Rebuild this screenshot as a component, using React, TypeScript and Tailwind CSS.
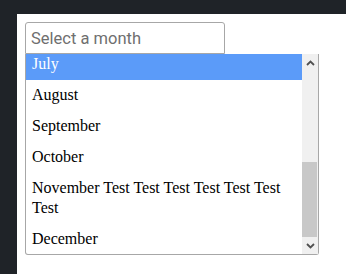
import React from 'react';

const MONTHS = ['July', 'August', 'September', 'October', 'November Test Test Test Test Test Test Test', 'December'];

function Chevron({ up }: { up: boolean }) {
    return (
        <svg width="9" height="6" viewBox="0 0 9 6" className="block">
            <polyline
                points={up ? '1,5 4.5,1.5 8,5' : '1,1 4.5,4.5 8,1'}
                fill="none"
                stroke="#505050"
                strokeWidth="1.8"
            />
        </svg>
    );
}

export default function App() {
    return (
        <div className="h-[274px] w-[346px] bg-[#1f2328] pt-[14px] pl-[17px]">
            <div className="h-[260px] bg-white pt-[8px] pl-[8px]">
                <input
                    type="text"
                    placeholder="Select a month"
                    className="block w-[200px] h-[32px] px-[5px] border border-[#a7a7a7] rounded-t-[3px] bg-white text-[16.5px] text-black placeholder-[#6f6f6f] outline-none"
                    style={{ fontFamily: 'Roboto, Arial, sans-serif' }}
                />
                {/* Open dropdown list, scrolled near the bottom */}
                <div className="flex w-[294px] h-[201px] border-x border-b border-[#a7a7a7] rounded-b-[3px] bg-white">
                    <div className="flex-1 overflow-hidden">
                        <div className="-mt-[5.5px]" style={{ fontFamily: '"Liberation Serif", "Times New Roman", serif' }}>
                            {MONTHS.map((month, i) => (
                                <div
                                    key={month}
                                    className={`pl-[6px] pr-[4px] py-[5.5px] text-[16px] leading-[20px] ${i === 0 ? 'bg-[#5b9bf9] text-white' : 'text-black'}`}
                                >
                                    {month}
                                </div>
                            ))}
                        </div>
                    </div>
                    <div className="flex flex-col w-[16px] bg-[#f0f0f0]">
                        <div className="h-[17px] flex items-center justify-center">
                            <Chevron up={true} />
                        </div>
                        <div className="flex-1" />
                        <div className="h-[75px] mr-[1px] bg-[#c8c8c8]" />
                        <div className="h-[17px] flex items-center justify-center">
                            <Chevron up={false} />
                        </div>
                    </div>
                </div>
            </div>
        </div>
    );
}
